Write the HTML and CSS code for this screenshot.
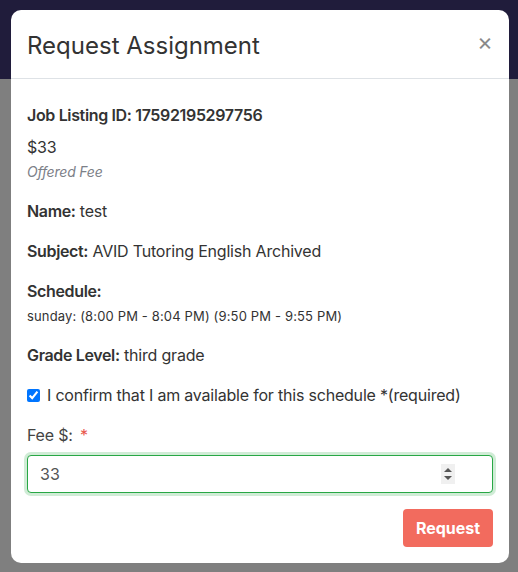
FILE: index.html
```html
<!DOCTYPE html>
<html lang="en">
<head>
    <meta charset="UTF-8">
    <meta name="viewport" content="width=device-width, initial-scale=1.0">
    <title>Request Assignment</title>
    <link rel="stylesheet" href="styles.css">
</head>

<body>

    <div class="topbar"></div>

    <div class="modal">
        <div class="modal-header">
            <h2>Request Assignment</h2>
            <span class="close">&times;</span>
        </div>

        <div class="modal-body">
            <p class="row-tight"><b>Job Listing ID: 17592195297756</b></p>
            <p class="fee">$33</p>
            <p class="fee-note">Offered Fee</p>

            <p><b>Name:</b> test</p>
            <p><b>Subject:</b> AVID Tutoring English Archived</p>

            <p class="row-tight"><b>Schedule:</b></p>
            <p class="times">sunday: (8:00 PM - 8:04 PM) (9:50 PM - 9:55 PM)</p>

            <p><b>Grade Level:</b> third grade</p>

            <label class="confirm">
                <input type="checkbox" checked>
                <span>I confirm that I am available for this schedule *(required)</span>
            </label>

            <label class="fee-label" for="fee">Fee $: <span class="req">*</span></label>
            <div class="fee-input">
                <input type="text" id="fee" value="33">
                <span class="spinner">
                    <svg width="14" height="20" viewBox="0 0 14 20">
                        <path d="M3 8 L7 4 L11 8 Z" fill="#555"/>
                        <path d="M3 12 L7 16 L11 12 Z" fill="#555"/>
                    </svg>
                </span>
            </div>

            <div class="actions">
                <button type="button">Request</button>
            </div>
        </div>
    </div>

</body>
</html>
```

FILE: styles.css
```css
* {
    margin: 0;
    padding: 0;
    box-sizing: border-box;
}

body {
    font-family: Inter, "Noto Sans", sans-serif;
    background-color: #7f7f7f;
    color: #333;
    height: 572px;
    overflow: hidden;
}

.topbar {
    height: 79px;
    background-color: #201c3b;
}

.modal {
    position: absolute;
    top: 10px;
    left: 11px;
    width: 498px;
    background-color: #fff;
    border-radius: 10px;
}

.modal-header {
    display: flex;
    justify-content: space-between;
    align-items: center;
    height: 69px;
    padding: 2px 16px 0;
    border-bottom: 1px solid #dee2e6;
}

.modal-header h2 {
    font-size: 24px;
    font-weight: 400;
    color: #333;
}

.close {
    font-size: 24px;
    color: #8a8a8a;
    margin-bottom: 8px;
    cursor: pointer;
}

.modal-body {
    padding: 24px 16px 16px;
    letter-spacing: -0.2px;
}

.modal-body p {
    font-size: 16px;
    line-height: 24px;
    margin-bottom: 16px;
}

.modal-body b {
    font-weight: 600;
    letter-spacing: -0.35px;
}

.modal-body p.row-tight {
    margin-bottom: 8px;
}

.modal-body p.fee {
    margin-bottom: 2px;
}

.modal-body p.fee-note {
    font-size: 14px;
    line-height: 21px;
    font-style: italic;
    color: #7c8088;
    margin-bottom: 17px;
}

.modal-body p.times {
    font-size: 13px;
    line-height: 20px;
    letter-spacing: 0.15px;
    margin-top: -5px;
    margin-bottom: 17px;
}

.confirm {
    display: flex;
    align-items: center;
    gap: 7px;
    font-size: 16px;
    line-height: 24px;
    margin-bottom: 16px;
}

.confirm input {
    width: 13px;
    height: 13px;
    margin: 0;
}

.fee-label {
    display: block;
    font-size: 16px;
    line-height: 24px;
    color: #444;
    margin-bottom: 8px;
}

.req {
    color: #e8554a;
    margin-left: 3px;
}

.fee-input {
    position: relative;
    margin-bottom: 16px;
}

.fee-input input {
    width: 100%;
    height: 38px;
    padding: 0 12px;
    font-family: inherit;
    font-size: 16px;
    color: #555;
    border: 1px solid #28a745;
    border-radius: 4px;
    box-shadow: 0 0 0 3px rgba(40, 167, 69, 0.22);
    outline: none;
}

.spinner {
    position: absolute;
    right: 38px;
    top: 9px;
    width: 14px;
    height: 20px;
    background-color: #f0f0f0;
}

.spinner svg {
    display: block;
}

.actions {
    display: flex;
    justify-content: flex-end;
}

.actions button {
    width: 90px;
    height: 38px;
    background-color: #f26b5e;
    color: #fff;
    border: none;
    border-radius: 4px;
    font-family: inherit;
    font-size: 16px;
    font-weight: 700;
    cursor: pointer;
}
```
